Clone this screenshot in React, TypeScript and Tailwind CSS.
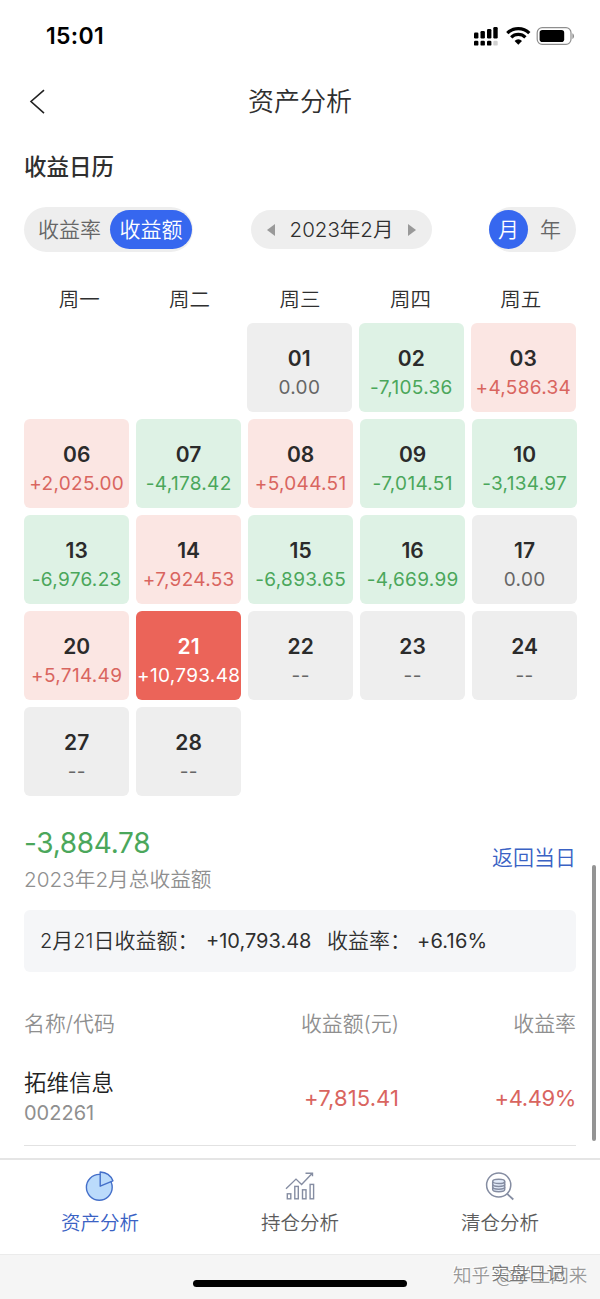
import clsx from 'clsx'

type Tone = 'flat' | 'up' | 'down' | 'active'

interface Day {
  day: string
  value: string
  tone: Tone
}

const WEEKDAYS = ['周一', '周二', '周三', '周四', '周五']

const WEEKS: Day[][] = [
  [
    { day: '01', value: '0.00', tone: 'flat' },
    { day: '02', value: '-7,105.36', tone: 'down' },
    { day: '03', value: '+4,586.34', tone: 'up' },
  ],
  [
    { day: '06', value: '+2,025.00', tone: 'up' },
    { day: '07', value: '-4,178.42', tone: 'down' },
    { day: '08', value: '+5,044.51', tone: 'up' },
    { day: '09', value: '-7,014.51', tone: 'down' },
    { day: '10', value: '-3,134.97', tone: 'down' },
  ],
  [
    { day: '13', value: '-6,976.23', tone: 'down' },
    { day: '14', value: '+7,924.53', tone: 'up' },
    { day: '15', value: '-6,893.65', tone: 'down' },
    { day: '16', value: '-4,669.99', tone: 'down' },
    { day: '17', value: '0.00', tone: 'flat' },
  ],
  [
    { day: '20', value: '+5,714.49', tone: 'up' },
    { day: '21', value: '+10,793.48', tone: 'active' },
    { day: '22', value: '--', tone: 'flat' },
    { day: '23', value: '--', tone: 'flat' },
    { day: '24', value: '--', tone: 'flat' },
  ],
  [
    { day: '27', value: '--', tone: 'flat' },
    { day: '28', value: '--', tone: 'flat' },
  ],
]

const CELL_BG: Record<Tone, string> = {
  flat: 'bg-[#eeeeee]',
  up: 'bg-[#fbe6e3]',
  down: 'bg-[#def2e5]',
  active: 'bg-[#eb6459]',
}

const VALUE_COLOR: Record<Tone, string> = {
  flat: 'text-[#666666]',
  up: 'text-[#d9655f]',
  down: 'text-[#4ba75b]',
  active: 'text-white',
}

function StatusBar() {
  return (
    <div className="flex h-[72px] items-center justify-between pr-[25px] pl-[46px]">
      <span className="text-[23px] leading-[28px] font-semibold tracking-[0.3px] text-black">15:01</span>
      <svg width="102" height="22" viewBox="0 0 102 22">
        {/* dual sim signal */}
        <g fill="#000">
          <rect x="1" y="7.5" width="4.4" height="6" rx="1.2" />
          <rect x="7.5" y="6" width="4.4" height="7.5" rx="1.2" />
          <rect x="14" y="4" width="4.4" height="9.5" rx="1.2" />
          <rect x="20.3" y="2" width="4.4" height="11.5" rx="1.2" />
          <rect x="1" y="15.8" width="4.4" height="4.8" rx="1.2" />
          <rect x="7.5" y="15.8" width="4.4" height="4.8" rx="1.2" />
          <rect x="14" y="15.8" width="4.4" height="4.8" rx="1.2" />
          <rect x="20.3" y="15.8" width="4.4" height="4.8" rx="1.2" fill="#d0d0d0" />
        </g>
        {/* wifi */}
        <g fill="none" stroke="#000" strokeWidth="3.2">
          <path d="M34.3 8.1a15.6 15.6 0 0 1 22 0" />
          <path d="M38.2 12.4a10 10 0 0 1 14.2 0" />
        </g>
        <path d="M41.6 15.9a5.2 5.2 0 0 1 7.4 0l-3.7 3.8z" fill="#000" />
        {/* battery */}
        <rect x="64.2" y="2.7" width="33.8" height="16.6" rx="5" fill="none" stroke="#8e8e8e" strokeWidth="1.2" />
        <rect x="66.6" y="5" width="24.6" height="12" rx="2.8" fill="#000" />
        <path d="M99.4 8.2c2.2 1 2.2 4.8 0 5.8z" fill="#8e8e8e" />
      </svg>
    </div>
  )
}

function DayCell({ day, value, tone }: Day) {
  return (
    <div
      className={clsx(
        'flex h-[89.3px] w-[105.4px] shrink-0 flex-col items-center rounded-[6px] pt-[21px] whitespace-nowrap',
        CELL_BG[tone],
      )}
    >
      <span
        className={clsx(
          'h-[29px] text-[21px] leading-[30px] font-semibold tracking-[0.1px]',
          tone === 'active' ? 'text-white' : 'text-[#2b2b2b]',
        )}
      >
        {day}
      </span>
      <span className={clsx('h-[30px] text-[19px] leading-[30px] font-normal tracking-[0.3px]', VALUE_COLOR[tone])}>
        {value}
      </span>
    </div>
  )
}

function PieIcon() {
  return (
    <svg width="32" height="32" viewBox="0 0 32 32" fill="#bbdbfb" stroke="#446fc9" strokeWidth="1.4" strokeLinejoin="round">
      <circle cx="15.3" cy="17.3" r="12.9" />
      <path d="M16.2 16.2V2c5.8.2 10.5 3.4 12.7 8.8z" />
    </svg>
  )
}

function BarsIcon() {
  return (
    <svg width="32" height="32" viewBox="0 0 32 32" fill="none" stroke="#858da2" strokeWidth="1.4">
      <path d="M2 18.7l10-9.6 5.6 5.4L28.3 3.3M21.5 3.3h7v3" />
      <rect x="3.3" y="23.8" width="3.5" height="5" />
      <rect x="10.8" y="16.4" width="3.5" height="12.4" />
      <rect x="18.5" y="19.8" width="3.5" height="9" />
      <rect x="26.1" y="14.4" width="3.5" height="14.4" />
    </svg>
  )
}

function SearchDataIcon() {
  return (
    <svg width="32" height="32" viewBox="0 0 32 32" fill="none" stroke="#858da2" strokeWidth="1.5">
      <circle cx="14.7" cy="15" r="12.1" />
      <path d="M23 23.7l6.3 5.8" strokeWidth="1.8" />
      <g fill="#e3ecfa">
        <path d="M8.7 11.6v8c0 1.2 2.7 2.2 6 2.2s6-1 6-2.2v-8" />
        <ellipse cx="14.7" cy="11.4" rx="6" ry="2.1" />
      </g>
      <path d="M8.7 14.2c0 1.2 2.7 2.2 6 2.2s6-1 6-2.2M8.7 17.1c0 1.2 2.7 2.2 6 2.2s6-1 6-2.2" />
    </svg>
  )
}

const TABS = [
  { label: '资产分析', icon: <PieIcon />, active: true },
  { label: '持仓分析', icon: <BarsIcon />, active: false },
  { label: '清仓分析', icon: <SearchDataIcon />, active: false },
]

export default function App() {
  return (
    <div
      className="relative flex h-[1299px] w-[600px] flex-col overflow-hidden bg-white font-[Inter,'Noto_Sans_CJK_SC',sans-serif] font-[350] text-[#2f2f2f]"
      lang="zh-CN"
    >
      <StatusBar />

      {/* header */}
      <header className="grid h-[60px] grid-cols-[1fr_auto_1fr] items-center px-6">
        <svg width="24" height="28" viewBox="0 0 24 28" fill="none" stroke="#222" strokeWidth="1.6">
          <path d="M20 2.2L7 13.5l13 11.6" />
        </svg>
        <h1 className="text-[26px] leading-[36px] font-[350]">资产分析</h1>
      </header>

      <main className="flex flex-1 flex-col px-6">
        <h2 className="mt-[18px] h-[33px] text-[22.5px] leading-[34px] font-medium">收益日历</h2>

        {/* switches */}
        <div className="mt-[24px] flex h-[45px] items-center justify-between text-[21px]">
          <div className="flex h-[45px] w-[169px] items-center rounded-full bg-[#eeeeee] pl-[14px] text-[#666666]">
            <span className="w-[72px]">收益率</span>
            <span className="flex h-[39px] w-[82px] items-center justify-center rounded-full bg-[#3667ef] text-white">
              收益额
            </span>
          </div>
          <div className="mr-[-1px] flex h-[39px] w-[181px] items-center justify-between rounded-full bg-[#eeeeee] px-[15px]">
            <svg width="10" height="14" viewBox="0 0 10 14" fill="#999">
              <path d="M9 1v12L1 7z" />
            </svg>
            <span className="pt-px text-[20.5px] whitespace-nowrap">2023年2月</span>
            <svg width="10" height="14" viewBox="0 0 10 14" fill="#999">
              <path d="M1 1v12l8-6z" />
            </svg>
          </div>
          <div className="flex h-[45px] w-[87px] items-center rounded-full bg-[#eeeeee] text-[#666666]">
            <span className="flex size-[39px] items-center justify-center rounded-full bg-[#3667ef] text-white">月</span>
            <span className="ml-[12px]">年</span>
          </div>
        </div>

        {/* calendar */}
        <div className="mt-[33px] grid h-[30px] grid-cols-5 text-center text-[20.5px] leading-[30px]">
          {WEEKDAYS.map(d => (
            <span key={d}>{d}</span>
          ))}
        </div>
        <div className="mt-[7.5px] flex flex-col gap-[6.8px]">
          {WEEKS.map((week, i) => (
            <div key={i} className={clsx('flex gap-[6.6px]', i === 0 && 'justify-end')}>
              {week.map(d => (
                <DayCell key={d.day} {...d} />
              ))}
            </div>
          ))}
        </div>

        {/* month total */}
        <div className="mt-[30px] flex items-center justify-between">
          <div>
            <div className="h-[34px] text-[28px] leading-[34px] font-normal tracking-[-0.3px] text-[#4ba75b]">
              -3,884.78
            </div>
            <div className="mt-[5px] h-[28px] text-[20.7px] leading-[30px] text-[#8f8f8f]">2023年2月总收益额</div>
          </div>
          <span className="pb-[4px] text-[21px] leading-[30px] text-[#3a62c4]">返回当日</span>
        </div>

        <div className="mt-[17px] flex h-[62px] shrink-0 items-center rounded-[6px] bg-[#f5f6f8] pl-4 text-[20px] whitespace-pre">
          <span className="w-[166px]">
            2<span className="text-[21px]">月</span>21<span className="text-[21px]">日收益额：</span>
          </span>
          <span className="w-[121px] font-normal">+10,793.48</span>
          <span className="w-[90px] text-[21px]">收益率：</span>
          <span className="font-normal tracking-[0.2px]">+6.16%</span>
        </div>

        {/* holdings */}
        <div className="mt-[37px] grid h-[30px] grid-cols-[200px_175px_1fr] text-[20.9px] leading-[30px] text-[#8f8f8f]">
          <span>名称/代码</span>
          <span className="text-right">收益额(元)</span>
          <span className="text-right">收益率</span>
        </div>
        <div className="mt-[27px] grid h-[80px] grid-cols-[200px_175px_1fr] border-b border-[#e2e2e2] text-[22px] font-normal text-[#d9655f]">
          <div>
            <div className="h-[33px] text-[22.5px] leading-[34px] font-[350] text-[#222]">拓维信息</div>
            <div className="h-[28px] text-[20px] leading-[28px] text-[#8f8f8f]">002261</div>
          </div>
          <span className="mt-[16px] text-right leading-[32px] tracking-[0.1px]">+7,815.41</span>
          <span className="mt-[16px] text-right leading-[32px] tracking-[-0.4px]">+4.49%</span>
        </div>
      </main>

      {/* tab bar */}
      <nav className="grid h-[96px] shrink-0 grid-cols-3 border-t-2 border-[#e5e5e5] bg-white">
        {TABS.map(tab => (
          <div
            key={tab.label}
            className={clsx(
              'flex flex-col items-center pt-[10px] text-[19.5px] leading-[30px]',
              tab.active ? 'text-[#3a62c4]' : 'text-[#5c5c5c]',
            )}
          >
            {tab.icon}
            <span className="mt-[5.5px]">{tab.label}</span>
          </div>
        ))}
      </nav>
      <footer className="flex h-[45px] shrink-0 justify-center border-t border-[#ebebeb] bg-[#f5f5f5] pt-[25px]">
        <div className="h-[7px] w-[214px] rounded-full bg-black" />
      </footer>

      {/* scroll thumb */}
      <div className="absolute top-[865px] right-[4px] h-[276px] w-[4px] rounded-full bg-[#949494]" />

      {/* watermark */}
      <div className="absolute top-[1263px] left-[453px] text-[18.5px] leading-[24px] whitespace-nowrap text-[#999] [text-shadow:-1px_-1px_0_#fff]">
        知乎 @学上网来
      </div>
      <div className="absolute top-[1261px] left-[491px] text-[18.5px] leading-[24px] whitespace-nowrap text-[#777] [text-shadow:-1px_-1px_0_#fff]">
        实盘日记
      </div>
    </div>
  )
}
